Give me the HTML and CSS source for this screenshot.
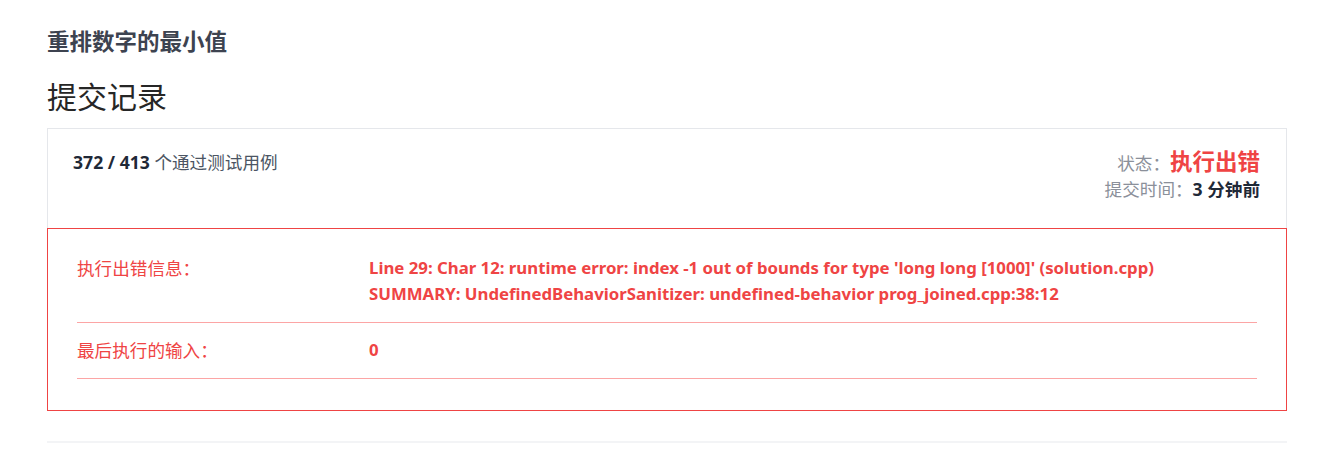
FILE: index.html
```html
<!DOCTYPE html>
<html lang="zh-CN">
<head>
<meta charset="utf-8">
<title>提交记录</title>
<link rel="stylesheet" href="styles.css">
</head>
<body>
<div class="page">
  <h2 class="problem-title">重排数字的最小值</h2>
  <h1 class="section-title">提交记录</h1>
  <div class="card">
    <div class="card-head">
      <div class="passed"><b>372 / 413</b> 个通过测试用例</div>
      <div class="meta">
        <div class="meta-line">状态：<span class="status">执行出错</span></div>
        <div class="meta-line">提交时间：<b>3 分钟前</b></div>
      </div>
    </div>
    <div class="error-box">
      <div class="row">
        <div class="label">执行出错信息：</div>
        <div class="value">Line 29: Char 12: runtime error: index -1 out of bounds for type 'long long [1000]' (solution.cpp)<br>SUMMARY: UndefinedBehaviorSanitizer: undefined-behavior prog_joined.cpp:38:12</div>
      </div>
      <div class="row">
        <div class="label">最后执行的输入：</div>
        <div class="value">0</div>
      </div>
    </div>
  </div>
  <div class="rule"></div>
</div>
</body>
</html>
```

FILE: styles.css
```css
* { box-sizing: border-box; }
html, body { margin: 0; padding: 0; background: #fff; }
body {
  font-family: "Noto Sans", "Noto Sans CJK SC", sans-serif;
  color: #1f2937;
}
.page {
  width: 1240px;
  margin-left: 47px;
  padding-top: 27px;
}
.problem-title {
  margin: 0;
  font-size: 22.5px;
  line-height: 30px;
  font-weight: 700;
  color: #3d4350;
}
.section-title {
  margin: 20px 0 0;
  font-size: 30px;
  line-height: 40px;
  font-weight: 400;
  color: #262626;
}
.card {
  margin-top: 11px;
}
.card-head {
  display: flex;
  justify-content: space-between;
  align-items: flex-start;
  border: 1px solid #e5e7eb;
  border-bottom: none;
  padding: 19px 26px 0 25px;
  height: 100px;
}
.passed {
  font-size: 17.6px;
  line-height: 28px;
  color: #4b5563;
}
.passed b { color: #1f2937; font-weight: 700; }
.meta { text-align: right; }
.meta-line {
  font-size: 17.6px;
  line-height: 28px;
  color: #8b909a;
}
.meta-line + .meta-line { line-height: 24px; }
.meta-line b { color: #1f2937; font-weight: 700; }
.status {
  color: #ef4444;
  font-weight: 700;
  font-size: 22.5px;
}
.error-box {
  border: 1px solid #ef4444;
  padding: 12px 29px 31px;
}
.row {
  display: flex;
  padding: 14px 0 15px;
  border-bottom: 1px solid #fca5a5;
}
.label {
  width: 292px;
  flex: none;
  font-size: 17.6px;
  line-height: 26px;
  color: #ef4444;
}
.value {
  font-size: 16.8px;
  line-height: 26px;
  font-weight: 700;
  color: #ef4444;
}
.rule {
  margin-top: 30px;
  height: 2px;
  background: #f3f4f6;
}
```
